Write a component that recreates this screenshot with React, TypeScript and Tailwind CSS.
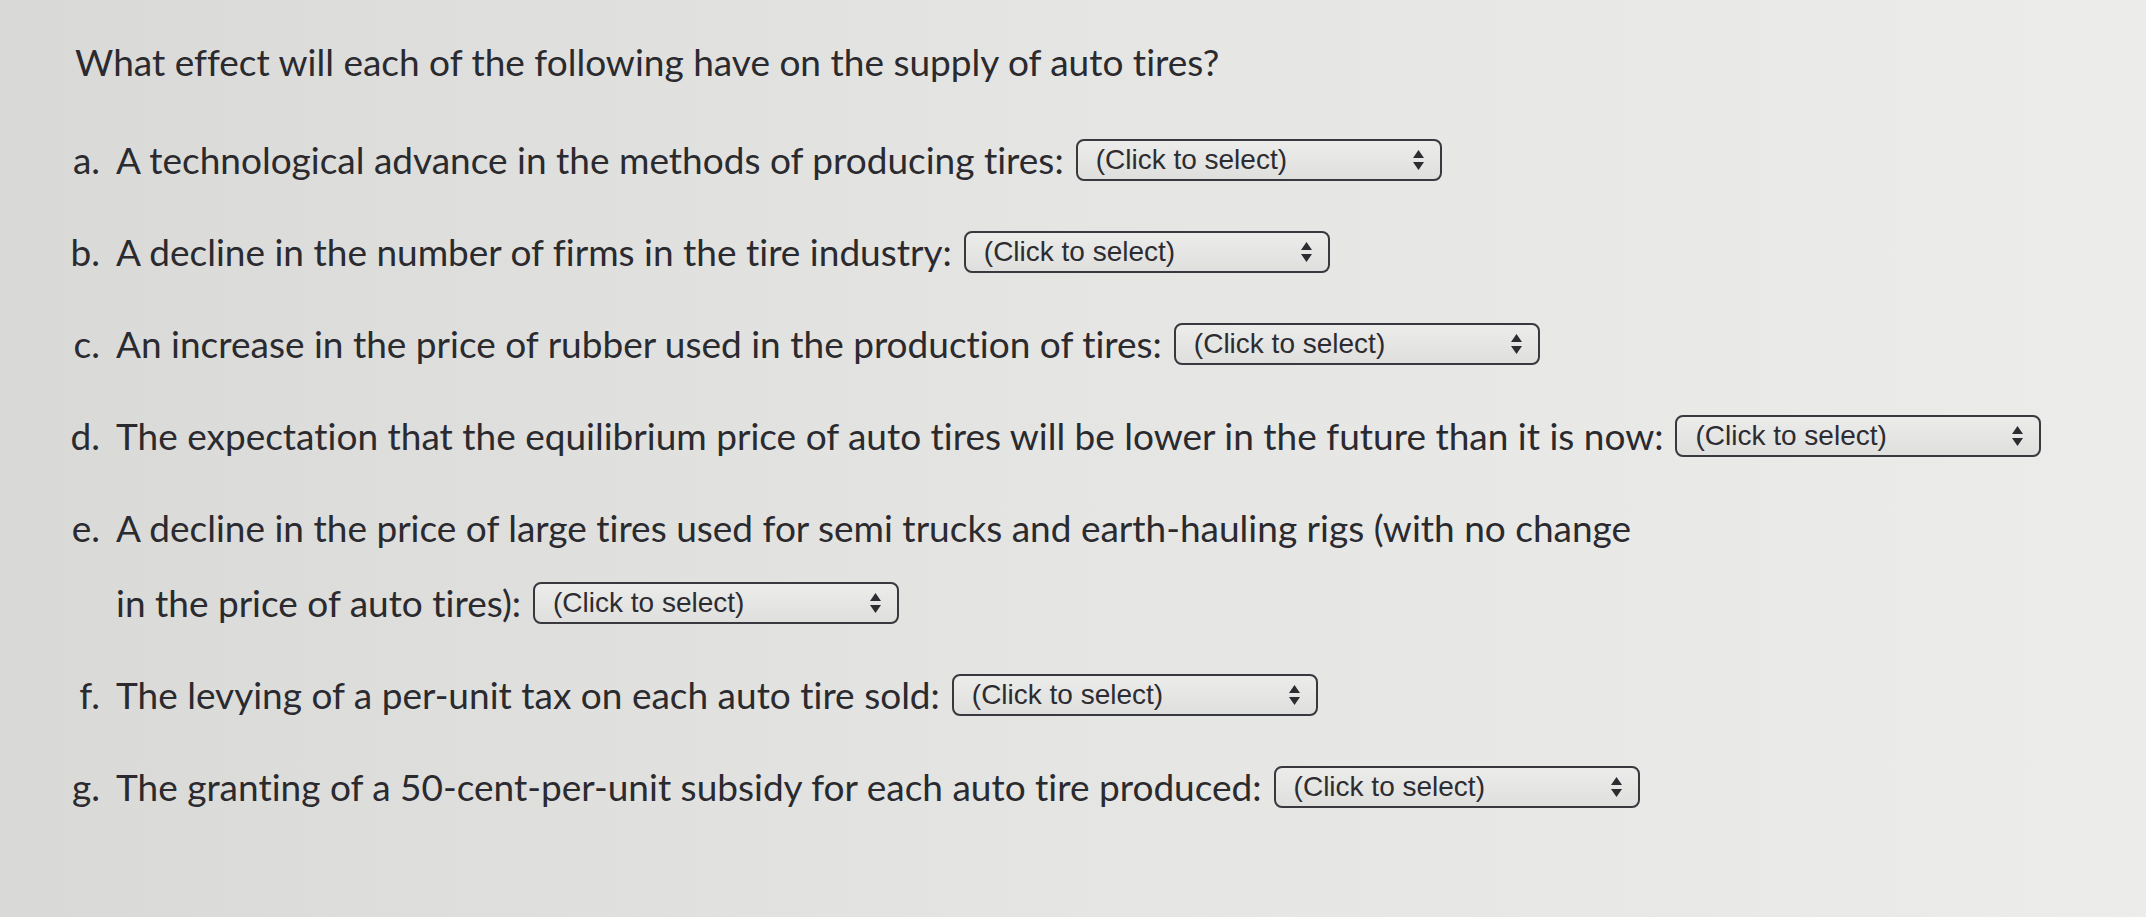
import React from 'react';

function Select() {
    return (
        <div className="inline-flex items-center justify-between w-[366px] h-[42px] border-2 border-[#38383e] rounded-[8px] bg-gradient-to-b from-[#ececeb] to-[#dfdfde] pl-[18px] pr-[15px] shrink-0">
            <span className="text-[28px] leading-none text-[#2c2c31] font-['Liberation_Sans',Arial,sans-serif]">(Click to select)</span>
            <svg width="13" height="22" viewBox="0 0 13 22" className="fill-[#2c2c31]">
                <path d="M6.5 1 L12 9 L1 9 Z" />
                <path d="M1 13 L12 13 L6.5 21 Z" />
            </svg>
        </div>
    );
}

function Row({ label, children }: { label: string; children: React.ReactNode }) {
    return (
        <div className="flex items-start">
            <div className="w-[40px] text-right shrink-0 h-[44px] leading-[44px]">{label}</div>
            <div className="ml-[16px]">{children}</div>
        </div>
    );
}

function Line({ text, select = true }: { text: string; select?: boolean }) {
    return (
        <div className="flex items-center h-[44px] gap-[12px] whitespace-nowrap">
            <span>{text}</span>
            {select && <Select />}
        </div>
    );
}

export default function App() {
    return (
        <div className="w-full h-[917px] overflow-hidden bg-gradient-to-r from-[#d9d9d7] via-[#e5e5e3] to-[#ececea] text-[#2a2a2f] font-['Lato',sans-serif] text-[37px] [font-variant-ligatures:none]">
            <div className="pl-[75px] pt-[40px]">
                <div className="h-[44px] leading-[44px]">What effect will each of the following have on the supply of auto tires?</div>
            </div>
            <div className="pl-[60px] pt-[54px] flex flex-col gap-[48px]">
                <Row label="a.">
                    <Line text="A technological advance in the methods of producing tires:" />
                </Row>
                <Row label="b.">
                    <Line text="A decline in the number of firms in the tire industry:" />
                </Row>
                <Row label="c.">
                    <Line text="An increase in the price of rubber used in the production of tires:" />
                </Row>
                <Row label="d.">
                    <Line text="The expectation that the equilibrium price of auto tires will be lower in the future than it is now:" />
                </Row>
                <Row label="e.">
                    <div className="flex flex-col gap-[31px]">
                        <Line text="A decline in the price of large tires used for semi trucks and earth-hauling rigs (with no change" select={false} />
                        <Line text="in the price of auto tires):" />
                    </div>
                </Row>
                <Row label="f.">
                    <Line text="The levying of a per-unit tax on each auto tire sold:" />
                </Row>
                <Row label="g.">
                    <Line text="The granting of a 50-cent-per-unit subsidy for each auto tire produced:" />
                </Row>
            </div>
        </div>
    );
}
